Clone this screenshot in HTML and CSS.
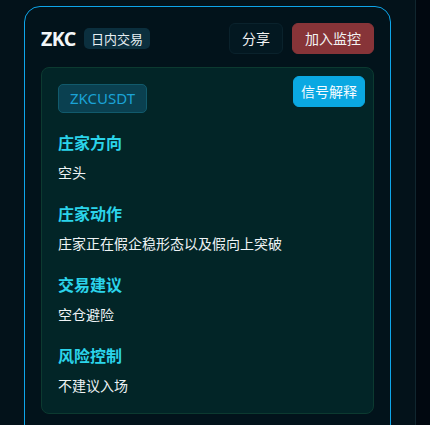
FILE: index.html
```html
<!DOCTYPE html>
<html lang="zh-CN">
<head>
<meta charset="utf-8">
<link rel="stylesheet" href="styles.css">
</head>
<body>
<div class="layout">
  <main class="main">
    <section class="card">
      <header class="head">
        <div class="title-group">
          <span class="sym">ZKC</span>
          <span class="badge">日内交易</span>
        </div>
        <div class="actions">
          <button class="btn btn-share">分享</button>
          <button class="btn btn-watch">加入监控</button>
        </div>
      </header>
      <div class="panel">
        <button class="btn btn-explain">信号解释</button>
        <span class="pair">ZKCUSDT</span>
        <div class="item">
          <h3 class="item-title">庄家方向</h3>
          <p class="item-text">空头</p>
        </div>
        <div class="item">
          <h3 class="item-title">庄家动作</h3>
          <p class="item-text">庄家正在假企稳形态以及假向上突破</p>
        </div>
        <div class="item">
          <h3 class="item-title">交易建议</h3>
          <p class="item-text">空仓避险</p>
        </div>
        <div class="item">
          <h3 class="item-title">风险控制</h3>
          <p class="item-text">不建议入场</p>
        </div>
      </div>
    </section>
  </main>
  <aside class="side"></aside>
</div>
</body>
</html>
```
FILE: styles.css
```css
* { box-sizing: border-box; }
html, body {
  margin: 0;
  padding: 0;
  height: 100%;
  background: #010810;
  font-family: "Noto Sans", "Noto Sans CJK SC", sans-serif;
  color: #e8f0f4;
  overflow: hidden;
}
.layout {
  display: flex;
  height: 425px;
}
.main {
  width: 416px;
  background: #03121a;
  border-right: 1px solid #10262f;
  padding: 6px 0 0 24px;
}
.side {
  flex: 1;
  background: #010810;
}
.card {
  width: 367px;
  height: 460px;
  border: 1px solid #0ea5e9;
  border-radius: 16px;
  background: #02131b;
  padding: 16px;
}
.head {
  display: flex;
  align-items: center;
  justify-content: space-between;
  height: 31px;
}
.title-group {
  display: flex;
  align-items: center;
  gap: 8px;
}
.sym {
  font-family: "Noto Sans", sans-serif;
  font-weight: 700;
  font-size: 19.5px;
  color: #f2f6f8;
  letter-spacing: -0.5px;
}
.badge {
  background: #0b2f3e;
  color: #e6eef2;
  font-size: 13px;
  line-height: 21px;
  padding: 0 7px;
  border-radius: 5px;
  font-family: "Noto Sans CJK SC", sans-serif;
}
.actions {
  display: flex;
  gap: 9px;
}
.btn {
  font-family: "Noto Sans CJK SC", sans-serif;
  font-size: 14px;
  height: 31px;
  line-height: 29px;
  padding: 0 12px;
  border-radius: 6px;
  border: 1px solid transparent;
  color: #f2f2f2;
  cursor: pointer;
}
.btn-share {
  background: #031821;
  border-color: #0a222c;
}
.btn-watch {
  background: #873438;
  border-color: #873438;
}
.panel {
  position: relative;
  margin-top: 13px;
  background: #022527;
  border: 1px solid #0c3a30;
  border-radius: 8px;
  padding: 16px 16px 18px;
}
.btn-explain {
  position: absolute;
  top: 8px;
  right: 8px;
  background: #0aa8e2;
  border-color: #0aa8e2;
  padding: 0 7px;
  color: #f4fbff;
}
.pair {
  display: inline-block;
  height: 29px;
  line-height: 27px;
  padding: 0 11px;
  background: #0a4050;
  border: 1px solid #115a6c;
  border-radius: 5px;
  color: #1aa3d6;
  font-size: 15px;
  font-family: "Noto Sans", sans-serif;
}
.item {
  margin-top: 17px;
}
.item + .item {
  margin-top: 19px;
}
.item-title {
  margin: 0;
  font-size: 16px;
  line-height: 24px;
  font-weight: 700;
  color: #2bd4ea;
  font-family: "Noto Sans CJK SC", sans-serif;
}
.item-text {
  margin: 8px 0 0;
  font-size: 14px;
  line-height: 20px;
  color: #eef3f5;
  font-family: "Noto Sans CJK SC", sans-serif;
}
```
